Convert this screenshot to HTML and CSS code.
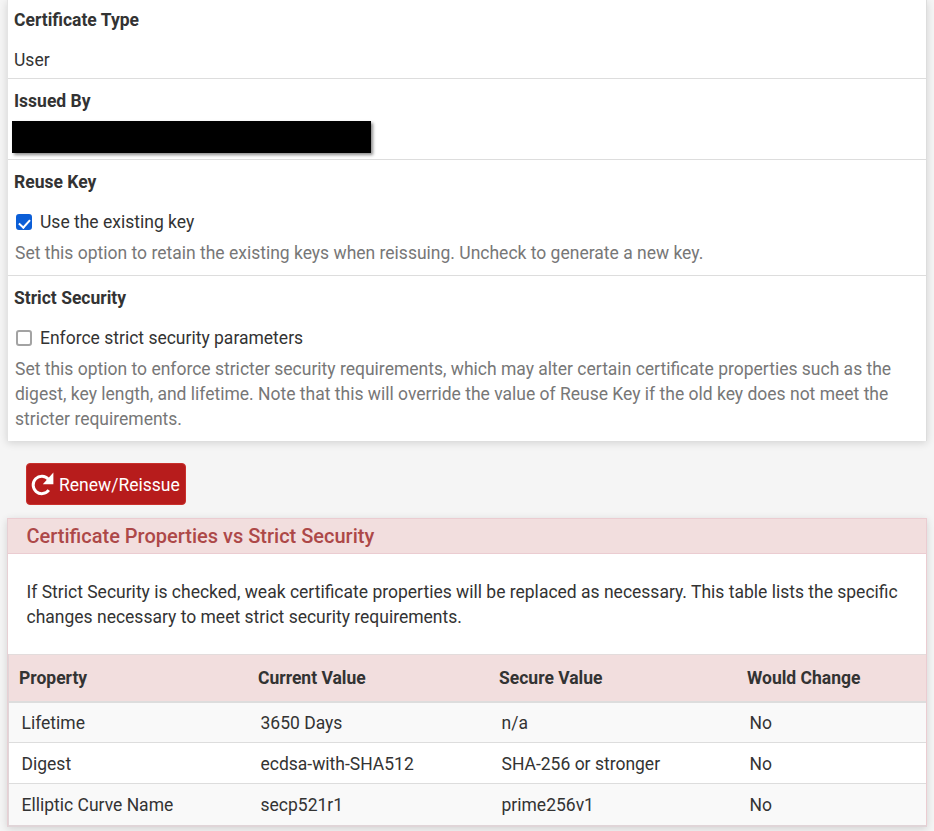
FILE: index.html
```html
<!DOCTYPE html>
<html lang="en">
<head>
<meta charset="utf-8">
<title>Certificate Renew</title>
<link rel="stylesheet" href="styles.css">
</head>
<body>
<section class="panel form-panel">
  <div class="row row-first">
    <div class="label">Certificate Type</div>
    <div class="value">User</div>
  </div>
  <div class="row row-issued">
    <div class="label">Issued By</div>
    <div class="redacted"></div>
  </div>
  <div class="row row-reuse">
    <div class="label">Reuse Key</div>
    <label class="check"><input type="checkbox" checked>Use the existing key</label>
    <div class="help">Set this option to retain the existing keys when reissuing. Uncheck to generate a new key.</div>
  </div>
  <div class="row row-last">
    <div class="label">Strict Security</div>
    <label class="check"><input type="checkbox">Enforce strict security parameters</label>
    <div class="help">Set this option to enforce stricter security requirements, which may alter certain certificate properties such as the digest, key length, and lifetime. Note that this will override the value of Reuse Key if the old key does not meet the stricter requirements.</div>
  </div>
</section>
<div class="actions">
  <button class="btn" type="button">
    <svg class="btn-icon" viewBox="0 0 24 24" aria-hidden="true"><path class="arc" d="M17.8 18.2A8.7 8.7 0 1 1 17.4 7.2"/><path class="tip" d="M22.4 0.4V12.2H11.8Z"/></svg>
    <span class="btn-text">Renew/Reissue</span>
  </button>
</div>
<section class="panel props">
  <h2 class="props-title">Certificate Properties vs Strict Security</h2>
  <p class="props-text">If Strict Security is checked, weak certificate properties will be replaced as necessary. This table lists the specific changes necessary to meet strict security requirements.</p>
  <div class="table-wrap">
  <table class="props-table">
    <colgroup><col class="c1"><col class="c2"><col class="c3"><col class="c4"></colgroup>
    <thead>
      <tr><th>Property</th><th>Current Value</th><th>Secure Value</th><th>Would Change</th></tr>
    </thead>
    <tbody>
      <tr><td>Lifetime</td><td>3650 Days</td><td>n/a</td><td>No</td></tr>
      <tr><td>Digest</td><td>ecdsa-with-SHA512</td><td>SHA-256 or stronger</td><td>No</td></tr>
      <tr><td>Elliptic Curve Name</td><td>secp521r1</td><td>prime256v1</td><td>No</td></tr>
    </tbody>
  </table>
  </div>
</section>
</body>
</html>
```
FILE: styles.css
```css
* { box-sizing: border-box; }
html, body { height: 831px; overflow: hidden; }
body {
  margin: 0;
  padding: 0 7px 0 7px;
  background: #f5f5f5;
  color: #333;
  font: 400 17.5px/25px Roboto, sans-serif;
}
.panel { background: #fff; box-shadow: 0 2px 8px rgba(0,0,0,.14); }
.form-panel { border-left: 1px solid #e4e4e4; border-right: 1px solid #ddd; }
.row { padding: 10px 7px 0 6px; border-bottom: 1px solid #ddd; }
.row-first { padding-top: 8px; height: 79px; }
.row-issued { height: 81px; }
.row-reuse { height: 116px; }
.row-last { height: 165px; border-bottom: 0; }
.label { font-weight: 700; }
.value { margin-top: 15px; }
.redacted {
  width: 359px;
  height: 32px;
  margin: 7px 0 0 -2px;
  background: #000;
  box-shadow: 2px 2px 3px rgba(0,0,0,.45);
}
.check { display: flex; align-items: center; margin-top: 15px; }
.check input {
  appearance: none;
  position: relative;
  width: 16px;
  height: 16px;
  margin: -1px 8.5px 0 1.5px;
  border: 2px solid #a3a3a3;
  border-radius: 3px;
  background: #fff;
}
.check input:checked { border-color: #0b5ed7; background: #0b5ed7; }
.check input:checked::after {
  content: "";
  position: absolute;
  left: 3.6px;
  top: .6px;
  width: 5px;
  height: 9px;
  border: solid #fff;
  border-width: 0 2px 2px 0;
  transform: rotate(42deg);
}
.help { margin: 6px 7px 0 1px; color: #777; }
.actions { padding: 22px 0 13px 19px; }
.btn {
  display: flex;
  align-items: center;
  gap: 4px;
  width: 160px;
  height: 42px;
  padding: 0 0 0 4px;
  border: 1px solid #c9302c;
  border-radius: 4px;
  background: #b71c1c;
  color: #fff;
  font: 400 17.5px/25px Roboto, sans-serif;
}
.btn-icon { width: 24px; height: 24px; flex: none; }
.btn-text { padding-top: 2px; }
.arc { fill: none; stroke: #fff; stroke-width: 3; }
.tip { fill: #fff; }
.props { border-style: solid; border-width: 1px 1px 2px 1px; border-color: #ebccd1 #ebccd1 #e0d5d8 #e6d0d4; }
.props-title {
  height: 35px;
  margin: 0;
  padding: 0 0 0 18.5px;
  background: #f2dede;
  border-bottom: 1px solid #ebccd1;
  color: #ad4848;
  font: 500 20px/34px Roboto, sans-serif;
}
.props-text { margin: 0; padding: 26px 18.5px 0; height: 100px; color: #333; }
.table-wrap { border-left: 1px solid #e0d5d8; }
.props-table { width: 100%; border-collapse: collapse; table-layout: fixed; }
.c1 { width: 239px; } .c2 { width: 241px; } .c3 { width: 248px; }
th {
  height: 47px;
  padding: 1px 0 0 10px;
  background: #f2dede;
  border-top: 1px solid #e3dcdc;
  border-bottom: 2px solid #ddd;
  text-align: left;
  font-weight: 700;
}
td { height: 41px; padding: 2px 0 0 12.5px; border-bottom: 1px solid #ddd; }
tbody tr:nth-child(odd) { background: #f9f9f9; }
tbody tr:last-child td { border-bottom: 0; }
```
